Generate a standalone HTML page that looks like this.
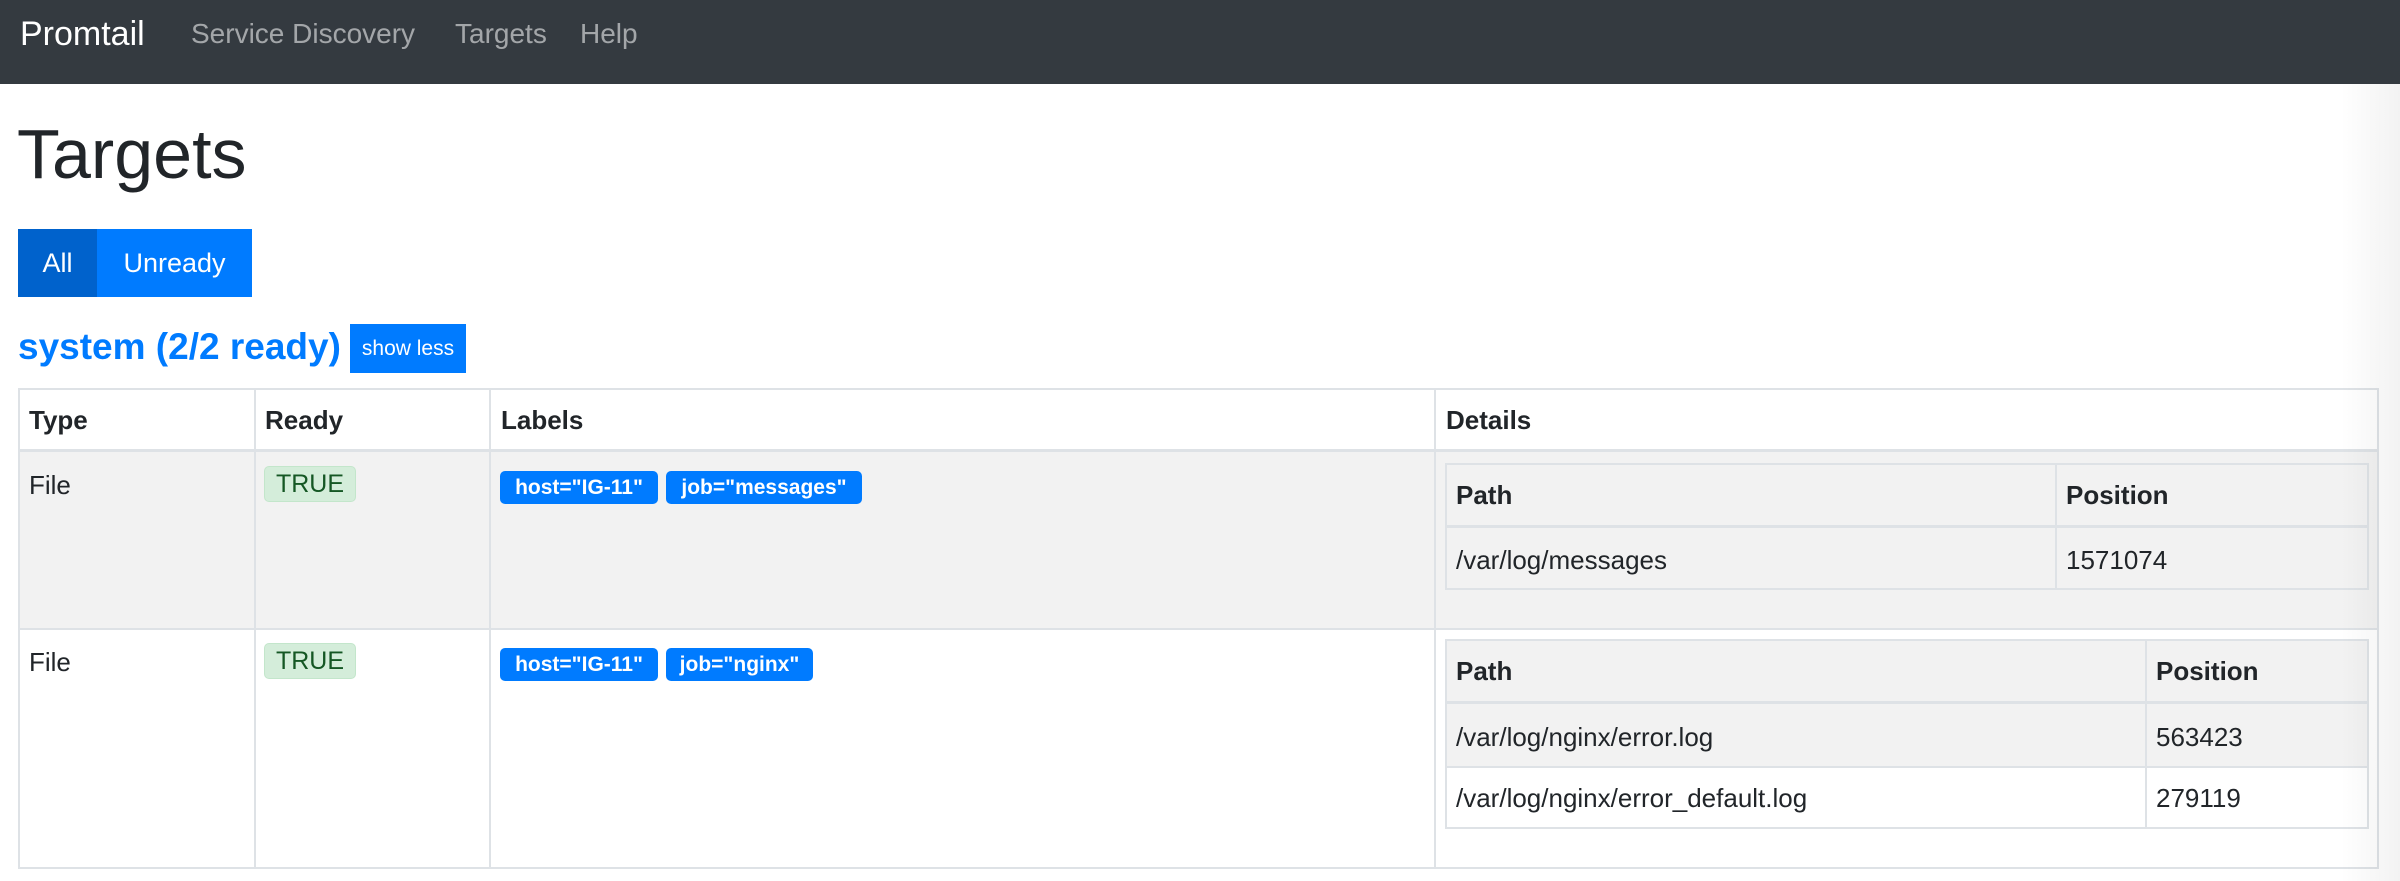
<!DOCTYPE html>
<html><head><meta charset="utf-8"><style>
*{box-sizing:border-box;margin:0;padding:0}
body{width:2400px;height:881px;background:#fff;font-family:"Liberation Sans",Arial,sans-serif;color:#212529;position:relative;overflow:hidden}
.a{position:absolute}
.nav{left:0;top:0;width:2400px;height:84px;background:#343a40}
.brand{left:20px;top:14px;font-size:34px;color:#fff;line-height:40px}
.nl{top:17px;font-size:28px;color:rgba(255,255,255,.55);line-height:34px}
h1{position:absolute;left:17px;top:112px;font-size:70px;font-weight:400;line-height:84px;color:#212529}
.btn{top:229px;height:68px;color:#fff;font-size:27px;line-height:68px;text-align:center}
.sys{left:18px;top:322px;font-size:37px;font-weight:bold;color:#007bff;line-height:50px}
.sl{left:350px;top:324px;width:116px;height:49px;background:#007bff;color:#fff;font-size:21px;line-height:49px;text-align:center}
.hl{background:#dee2e6}
.t{font-size:26px;line-height:36px}
.b{font-weight:bold}
.badge{background:#007bff;color:#fff;font-weight:bold;font-size:21px;line-height:33px;height:33px;border-radius:5px;text-align:center;white-space:nowrap}
.tr{background:#d4edda;border:1px solid #c3e6cb;color:#155724;font-size:25px;line-height:34px;border-radius:5px;text-align:center}
</style></head><body>
<div class="a nav"></div>
<div class="a brand">Promtail</div>
<div class="a nl" style="left:191px">Service Discovery</div>
<div class="a nl" style="left:455px">Targets</div>
<div class="a nl" style="left:580px">Help</div>
<h1>Targets</h1>
<div class="a btn" style="left:18px;width:79px;background:#0062cc">All</div>
<div class="a btn" style="left:97px;width:155px;background:#007bff">Unready</div>
<div class="a sys">system (2/2 ready)</div>
<div class="a sl">show less</div>

<div class="a" style="left:18px;top:452px;width:2361px;height:177px;background:#f2f2f2"></div>
<div class="a hl" style="left:18px;top:388px;width:2361px;height:2px"></div>
<div class="a hl" style="left:18px;top:449px;width:2361px;height:3px"></div>
<div class="a hl" style="left:18px;top:628px;width:2361px;height:2px"></div>
<div class="a hl" style="left:18px;top:867px;width:2361px;height:2px"></div>
<div class="a hl" style="left:18px;top:388px;width:2px;height:481px"></div>
<div class="a hl" style="left:254px;top:388px;width:2px;height:481px"></div>
<div class="a hl" style="left:489px;top:388px;width:2px;height:481px"></div>
<div class="a hl" style="left:1434px;top:388px;width:2px;height:481px"></div>
<div class="a hl" style="left:2377px;top:388px;width:2px;height:481px"></div>
<div class="a t b" style="left:29px;top:402px">Type</div>
<div class="a t b" style="left:265px;top:402px">Ready</div>
<div class="a t b" style="left:501px;top:402px">Labels</div>
<div class="a t b" style="left:1446px;top:402px">Details</div>

<div class="a t" style="left:29px;top:467px">File</div>
<div class="a tr" style="left:264px;top:466px;width:92px;height:36px">TRUE</div>
<div class="a badge" style="left:500px;top:471px;width:158px">host="IG-11"</div>
<div class="a badge" style="left:666px;top:471px;width:196px">job="messages"</div>

<div class="a t" style="left:29px;top:644px">File</div>
<div class="a tr" style="left:264px;top:643px;width:92px;height:36px">TRUE</div>
<div class="a badge" style="left:500px;top:648px;width:158px">host="IG-11"</div>
<div class="a badge" style="left:666px;top:648px;width:147px">job="nginx"</div>

<div class="a" style="left:1445px;top:463px;width:924px;height:127px;background:#f2f2f2;border:2px solid #dee2e6"></div>
<div class="a hl" style="left:1445px;top:525px;width:924px;height:3px"></div>
<div class="a hl" style="left:2055px;top:463px;width:2px;height:127px"></div>
<div class="a t b" style="left:1456px;top:477px">Path</div>
<div class="a t b" style="left:2066px;top:477px">Position</div>
<div class="a t" style="left:1456px;top:542px">/var/log/messages</div>
<div class="a t" style="left:2066px;top:542px">1571074</div>

<div class="a" style="left:1445px;top:639px;width:924px;height:190px;background:#fff;border:2px solid #dee2e6"></div>
<div class="a" style="left:1447px;top:641px;width:920px;height:126px;background:#f2f2f2"></div>
<div class="a hl" style="left:1445px;top:701px;width:924px;height:3px"></div>
<div class="a hl" style="left:1445px;top:766px;width:924px;height:2px"></div>
<div class="a hl" style="left:2145px;top:639px;width:2px;height:190px"></div>
<div class="a t b" style="left:1456px;top:653px">Path</div>
<div class="a t b" style="left:2156px;top:653px">Position</div>
<div class="a t" style="left:1456px;top:719px">/var/log/nginx/error.log</div>
<div class="a t" style="left:2156px;top:719px">563423</div>
<div class="a t" style="left:1456px;top:780px">/var/log/nginx/error_default.log</div>
<div class="a t" style="left:2156px;top:780px">279119</div>

<div class="a" style="left:2340px;top:84px;width:60px;height:797px;background:linear-gradient(to right,rgba(0,0,0,0),rgba(0,0,0,.05))"></div>
</body></html>
